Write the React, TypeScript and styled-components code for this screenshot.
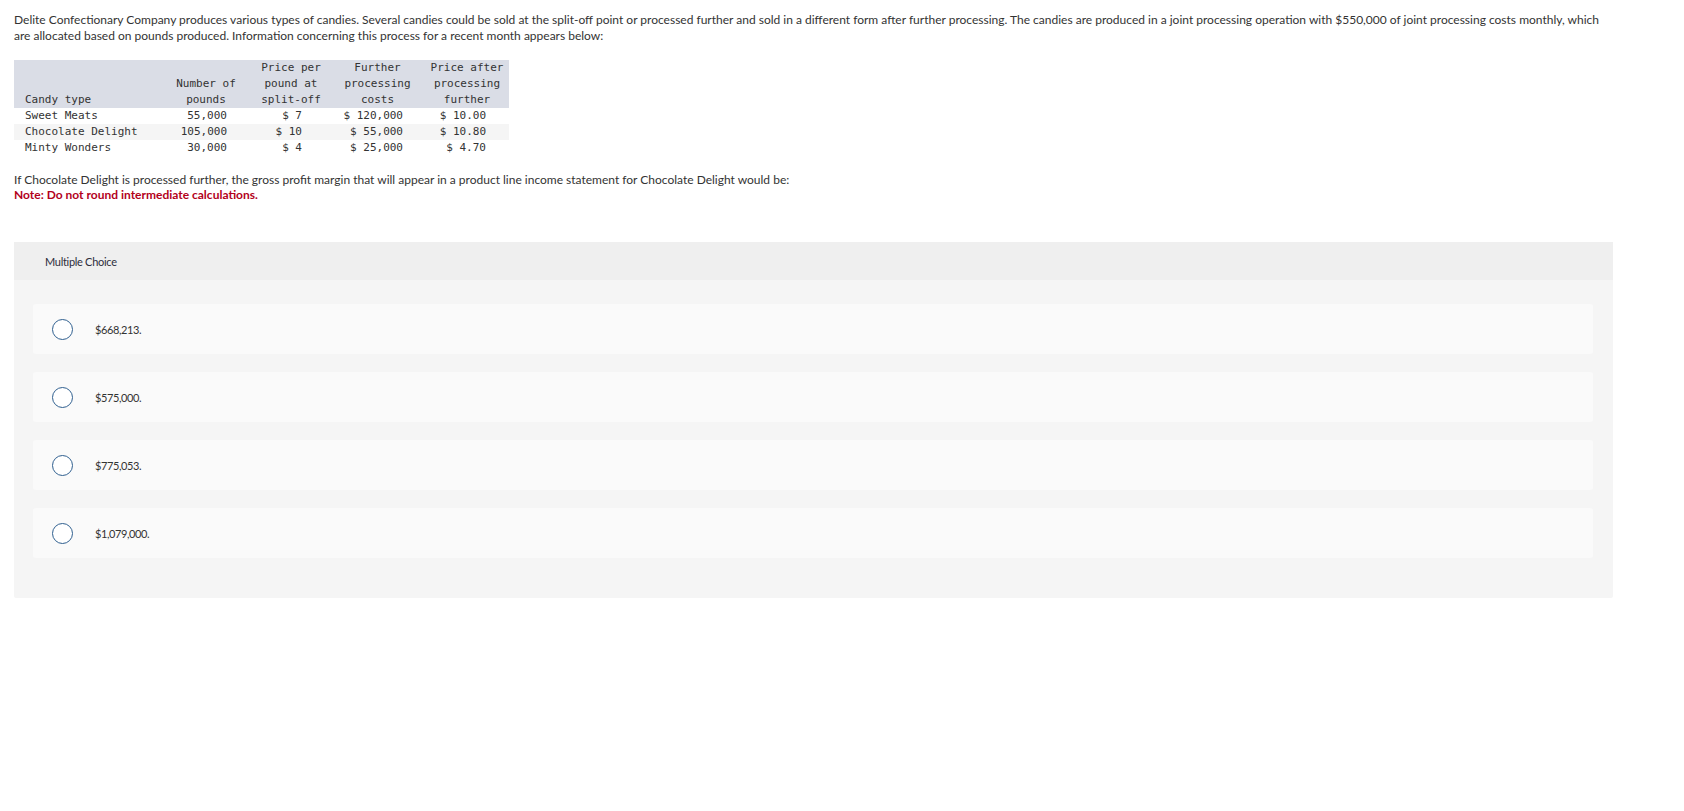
import React from 'react';
import styled, { createGlobalStyle } from 'styled-components';

const GlobalStyle = createGlobalStyle`
  body {
    margin: 0;
    background: #ffffff;
    font-family: Lato, 'Liberation Sans', Arial, sans-serif;
    color: #333333;
  }
`;

const Page = styled.div`
  padding: 12px 71px 20px 14px;
`;

const Prompt = styled.p`
  margin: 0;
  font-size: 12px;
  line-height: 16px;
`;

const DataTable = styled.table`
  margin-top: 16px;
  border-collapse: collapse;
  font-family: 'DejaVu Sans Mono', 'Liberation Mono', monospace;
  font-size: 11px;
  line-height: 16px;
  color: #333333;
`;

const HeadRow = styled.tr`
  background: #dadde6;
`;

const BodyRow = styled.tr<{ $shaded?: boolean }>`
  background: ${(p) => (p.$shaded ? '#f5f5f5' : 'transparent')};
`;

const Th = styled.th<{ $w: number; $left?: boolean }>`
  box-sizing: border-box;
  width: ${(p) => p.$w}px;
  padding: ${(p) => (p.$left ? '0 0 0 11px' : '0')};
  font-weight: normal;
  text-align: ${(p) => (p.$left ? 'left' : 'center')};
  vertical-align: bottom;
  white-space: pre-line;
`;

const Td = styled.td<{ $pr?: number }>`
  padding: ${(p) => (p.$pr !== undefined ? `0 ${p.$pr}px 0 0` : '0 0 0 11px')};
  text-align: ${(p) => (p.$pr !== undefined ? 'right' : 'left')};
  white-space: pre;
`;

const Question = styled.p`
  margin: 16px 0 0;
  font-size: 12px;
  line-height: 15px;
`;

const Note = styled.p`
  margin: 0;
  font-size: 12px;
  line-height: 16px;
  font-weight: 700;
  color: #b3001b;
`;

const Panel = styled.section`
  margin-top: 39px;
  background: #f5f5f5;
  border-radius: 2px;
`;

const PanelHeader = styled.div`
  height: 38px;
  display: flex;
  align-items: center;
  padding-left: 31px;
  background: #efefef;
  font-size: 11px;
  letter-spacing: -0.3px;
  color: #2d2d3c;
`;

const Choices = styled.div`
  display: flex;
  flex-direction: column;
  gap: 18px;
  padding: 24px 20px 40px 19px;
`;

const Choice = styled.label`
  height: 50px;
  display: flex;
  align-items: center;
  gap: 22px;
  padding-left: 19px;
  background: #fafafa;
  border-radius: 3px;
  font-size: 11px;
  letter-spacing: -0.4px;
  color: #333333;
`;

const Radio = styled.span`
  width: 21px;
  height: 21px;
  box-sizing: border-box;
  border: 1.5px solid #2f5f8f;
  border-radius: 50%;
  background: #ffffff;
  flex-shrink: 0;
`;

const rows = [
  { name: 'Sweet Meats', lbs: '55,000', split: '$ 7', cost: '$ 120,000', after: '$ 10.00' },
  { name: 'Chocolate Delight', lbs: '105,000', split: '$ 10', cost: '$ 55,000', after: '$ 10.80' },
  { name: 'Minty Wonders', lbs: '30,000', split: '$ 4', cost: '$ 25,000', after: '$ 4.70' },
];

const answers = ['$668,213.', '$575,000.', '$775,053.', '$1,079,000.'];

export default function App() {
  return (
    <>
      <GlobalStyle />
      <Page>
        <Prompt>
          Delite Confectionary Company produces various types of candies. Several candies could be sold at the
          split-off point or processed further and sold in a different form after further processing. The candies are
          produced in a joint processing operation with $550,000 of joint processing costs monthly, which are allocated
          based on pounds produced. Information concerning this process for a recent month appears below:
        </Prompt>

        <DataTable>
          <thead>
            <HeadRow>
              <Th $w={146} $left>Candy type</Th>
              <Th $w={92}>{'Number of\npounds'}</Th>
              <Th $w={78}>{'Price per\npound at\nsplit-off'}</Th>
              <Th $w={95}>{'Further\nprocessing\ncosts'}</Th>
              <Th $w={84}>{'Price after\nprocessing\nfurther'}</Th>
            </HeadRow>
          </thead>
          <tbody>
            {rows.map((r, i) => (
              <BodyRow key={r.name} $shaded={i === 1}>
                <Td>{r.name}</Td>
                <Td $pr={25}>{r.lbs}</Td>
                <Td $pr={28}>{r.split}</Td>
                <Td $pr={22}>{r.cost}</Td>
                <Td $pr={23}>{r.after}</Td>
              </BodyRow>
            ))}
          </tbody>
        </DataTable>

        <Question>
          If Chocolate Delight is processed further, the gross profit margin that will appear in a product line income
          statement for Chocolate Delight would be:
        </Question>
        <Note>Note: Do not round intermediate calculations.</Note>

        <Panel>
          <PanelHeader>Multiple Choice</PanelHeader>
          <Choices>
            {answers.map((a) => (
              <Choice key={a}>
                <Radio />
                {a}
              </Choice>
            ))}
          </Choices>
        </Panel>
      </Page>
    </>
  );
}
